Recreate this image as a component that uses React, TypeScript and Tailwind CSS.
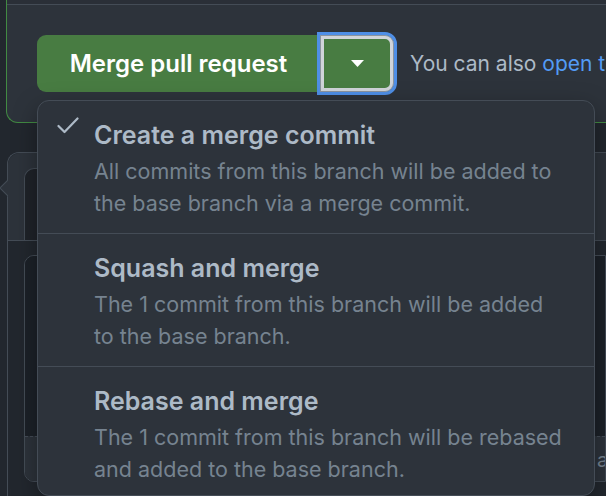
import { Fragment } from 'react';

/* Merge button with its method dropdown open — GitHub dark dimmed, zoomed */

type MergeMethod = { title: string; lines: string[]; checked?: boolean };

const methods: MergeMethod[] = [
  {
    title: 'Create a merge commit',
    lines: ['All commits from this branch will be added to', 'the base branch via a merge commit.'],
    checked: true,
  },
  {
    title: 'Squash and merge',
    lines: ['The 1 commit from this branch will be added', 'to the base branch.'],
  },
  {
    title: 'Rebase and merge',
    lines: ['The 1 commit from this branch will be rebased', 'and added to the base branch.'],
  },
];

function CheckIcon() {
  return (
    <svg width="22" height="18" viewBox="0 0 22 18" fill="none" className="mt-[-3px]">
      <polyline points="1.5,10 7.5,16 20.5,2.5" stroke="#adbac7" strokeWidth="2.2" strokeLinecap="round" strokeLinejoin="round" />
    </svg>
  );
}

function Caret() {
  return (
    <svg width="13" height="7" viewBox="0 0 13 7">
      <polygon points="0,0 13,0 6.5,7" fill="#ffffff" />
    </svg>
  );
}

function MergeMenu() {
  return (
    <div className="absolute left-[37px] top-[100px] w-[558px] h-[396px] overflow-hidden rounded-[12px] border border-[#444c56] bg-[#2d333b] shadow-[0_8px_24px_rgba(0,0,0,0.35)]">
      {methods.map((m, i) => (
        <div key={m.title} className={`flex pl-[19px] pr-[16px] pt-[18px] pb-[14px] ${i > 0 ? 'border-t border-[#444c56]' : ''}`}>
          <div className="w-[37px] shrink-0">{m.checked && <CheckIcon />}</div>
          <div className="flex flex-col whitespace-nowrap">
            <span className="text-[25px] leading-[32px] font-semibold text-[#adbac7]">{m.title}</span>
            <span className="mt-[4px] text-[21.5px] leading-[32px] text-[#768390]">
              {m.lines.map((l, j) => (
                <Fragment key={j}>
                  {j > 0 && <br />}
                  {l}
                </Fragment>
              ))}
            </span>
          </div>
        </div>
      ))}
    </div>
  );
}

export default function App() {
  return (
    <div className="relative w-[606px] h-[496px] overflow-hidden bg-[#22272e] font-['Inter',sans-serif]">
      {/* merge box */}
      <div className="ml-[6px] h-[123px] rounded-bl-[12px] border-l border-b border-[#428a43] bg-[#2d333b]">
        <div className="h-[4px] border-b border-[#444c56] box-content bg-[#2a2f37]" />
        <div className="flex items-center pl-[30px] pt-[30px]">
          <button className="h-[57px] w-[281px] shrink-0 whitespace-nowrap rounded-l-[9px] bg-[#487c42] pl-[2px] text-[24px] font-semibold text-white">
            Merge pull request
          </button>
          <button className="ml-[2px] flex h-[57px] w-[74px] shrink-0 items-center justify-center rounded-r-[9px] bg-[#487c42] shadow-[inset_0_0_0_1px_#8b949e,inset_0_0_0_4px_#d0d4d9] outline-[3px] outline-solid outline-[#4f8fe6]">
            <Caret />
          </button>
          <span className="ml-[16px] whitespace-nowrap text-[21px] text-[#adbac7]">
            You can also <span className="text-[#539bf5]">open this in GitHub Desktop</span>
          </span>
        </div>
      </div>

      {/* timeline behind the menu */}
      <div className="relative ml-[7px] mt-[29px] h-[400px] rounded-tl-[12px] border-l border-t border-[#444c56]">
        <div className="absolute left-[-8px] top-[22px] h-[26px] w-[8px] overflow-hidden">
          <div className="ml-[3px] mt-[4px] h-[18px] w-[18px] rotate-45 border border-[#444c56] bg-[#2d333b]" />
        </div>
        <div className="h-[88px] rounded-tl-[12px] border-b border-[#444c56] bg-[#2d333b] pl-[16px] pt-[15px]">
          <div className="h-[72px] w-[140px] rounded-tl-[10px] border-l border-t border-[#444c56] bg-[#1f2329]" />
        </div>
        <div className="ml-[16px] mt-[14px] flex h-[227px] flex-col overflow-hidden rounded-l-[10px] border border-[#444c56]">
          <div className="h-[180px] bg-[#1c2128]" />
          <div className="flex flex-1 items-start border-t border-dashed border-[#444c56] bg-[#2d333b] pl-[572px] pt-[8px]">
            <span className="whitespace-nowrap text-[20px] text-[#768390]">as</span>
          </div>
        </div>
      </div>

      <MergeMenu />
    </div>
  );
}
